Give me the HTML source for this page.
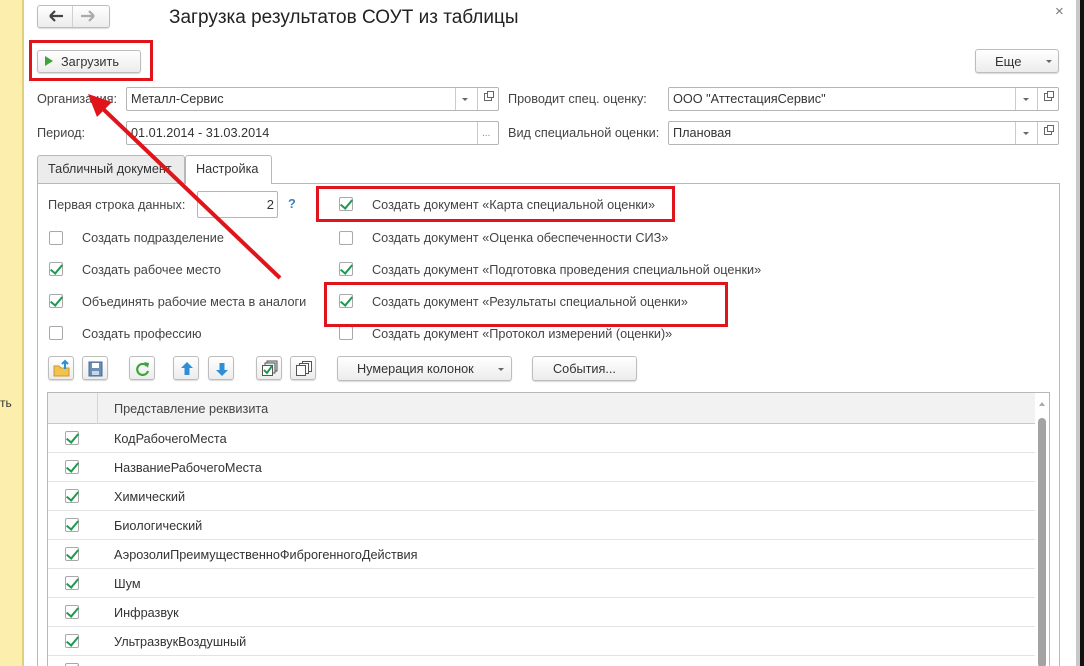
<!DOCTYPE html>
<html><head><meta charset="utf-8"><style>
*{box-sizing:border-box;margin:0;padding:0}
html,body{width:1084px;height:666px;overflow:hidden}
body{background:#fff;font-family:"Liberation Sans",sans-serif;font-size:12.7px;color:#444;position:relative}
.a{position:absolute}
.btn{position:absolute;border:1px solid #bdbdbd;border-radius:3px;background:linear-gradient(#fff,#ececec);box-shadow:0 1px 1px rgba(0,0,0,.15)}
.inp{position:absolute;border:1px solid #b5b5b5;border-radius:2px;background:#fff;height:24px}
.inp span{position:absolute;left:4px;top:4px;color:#333}
.cb{position:absolute;width:14px;height:14px;border:1px solid #a9a9a9;border-radius:2px;background:#fff}
.cb.on::after{content:"";position:absolute;left:3px;top:-1px;width:5px;height:10px;border:solid #1e9a4f;border-width:0 2.5px 2.5px 0;transform:rotate(40deg)}
.red{position:absolute;border:3.5px solid #e0141b}
.row{position:absolute;left:48px;width:987px;height:29px;border-bottom:1px solid #e3e3e3}
.row .cb{left:17px;top:7px}
.row span{position:absolute;left:66px;top:8px;color:#333}
.ib{width:26px;height:24px}
.ib svg{position:absolute;left:0;top:0}
</style></head><body>
<div class="a" style="left:0;top:0;width:24px;height:666px;background:#fcefad;border-right:2px solid #e2cf7b"></div>
<div class="a" style="left:0;top:396px;font-size:12px;color:#333">ть</div>
<div class="a" style="left:1076px;top:0;width:4px;height:666px;background:#c8c8c8"></div>
<div class="a" style="left:1080px;top:0;width:4px;height:666px;background:#111"></div>

<div class="btn" style="left:37px;top:5px;width:73px;height:23px"></div>
<div class="a" style="left:72px;top:6px;width:1px;height:21px;background:#d0d0d0"></div>
<svg class="a" style="left:46px;top:9px" width="60" height="16">
<path d="M4 7 H17 M4 7 L9 2 M4 7 L9 12" stroke="#444" stroke-width="2.2" fill="none"/>
<path d="M35 7 H48 M48 7 L43 2 M48 7 L43 12" stroke="#aaa" stroke-width="2.2" fill="none"/>
</svg>
<div class="a" style="left:169px;top:7px;font-size:19px;color:#222">Загрузка результатов СОУТ из таблицы</div>
<div class="a" style="left:1055px;top:3px;font-size:15px;color:#777">×</div>

<div class="btn" style="left:37px;top:50px;width:104px;height:23px"></div>
<div class="a" style="left:45px;top:56px;width:0;height:0;border-left:8px solid #3aa63a;border-top:5px solid transparent;border-bottom:5px solid transparent"></div>
<div class="a" style="left:61px;top:55px;color:#333">Загрузить</div>
<div class="red" style="left:29px;top:40px;width:124px;height:41px"></div>

<div class="btn" style="left:975px;top:49px;width:84px;height:24px"></div>
<div class="a" style="left:995px;top:54px;font-size:13px;color:#333">Еще</div>
<div class="a" style="left:1046px;top:60px;border-top:3px solid #666;border-left:3px solid transparent;border-right:3px solid transparent"></div>

<div class="a" style="left:37px;top:92px">Организация:</div>
<div class="inp" style="left:126px;top:87px;width:373px"><span>Металл-Сервис</span>
<div class="a" style="left:328px;top:0;width:1px;height:22px;background:#ccc"></div>
<div class="a" style="left:335px;top:10px;border-top:3px solid #666;border-left:3px solid transparent;border-right:3px solid transparent"></div>
<div class="a" style="left:350px;top:0;width:1px;height:22px;background:#ccc"></div>
<div class="a" style="left:357px;top:5px;width:8px;height:8px;border:1px solid #666"></div>
<div class="a" style="left:360px;top:3px;width:7px;height:7px;border:1px solid #666;background:#fff"></div></div>
<div class="a" style="left:508px;top:92px">Проводит спец. оценку:</div>
<div class="inp" style="left:668px;top:87px;width:391px"><span>ООО "АттестацияСервис"</span>
<div class="a" style="left:346px;top:0;width:1px;height:22px;background:#ccc"></div>
<div class="a" style="left:354px;top:10px;border-top:3px solid #666;border-left:3px solid transparent;border-right:3px solid transparent"></div>
<div class="a" style="left:368px;top:0;width:1px;height:22px;background:#ccc"></div>
<div class="a" style="left:375px;top:5px;width:8px;height:8px;border:1px solid #666"></div>
<div class="a" style="left:378px;top:3px;width:7px;height:7px;border:1px solid #666;background:#fff"></div></div>

<div class="a" style="left:37px;top:126px">Период:</div>
<div class="inp" style="left:126px;top:121px;width:373px"><span>01.01.2014 - 31.03.2014</span>
<div class="a" style="left:350px;top:0;width:1px;height:22px;background:#ccc"></div>
<div class="a" style="left:355px;top:6px;font-size:10px;color:#888">...</div></div>
<div class="a" style="left:508px;top:126px">Вид специальной оценки:</div>
<div class="inp" style="left:668px;top:121px;width:391px"><span>Плановая</span>
<div class="a" style="left:346px;top:0;width:1px;height:22px;background:#ccc"></div>
<div class="a" style="left:354px;top:10px;border-top:3px solid #666;border-left:3px solid transparent;border-right:3px solid transparent"></div>
<div class="a" style="left:368px;top:0;width:1px;height:22px;background:#ccc"></div>
<div class="a" style="left:375px;top:5px;width:8px;height:8px;border:1px solid #666"></div>
<div class="a" style="left:378px;top:3px;width:7px;height:7px;border:1px solid #666;background:#fff"></div></div>

<div class="a" style="left:37px;top:183px;width:1023px;height:490px;border:1px solid #b8b8b8"></div>
<div class="a" style="left:37px;top:155px;width:148px;height:29px;background:#ececec;border:1px solid #b8b8b8;border-radius:3px 3px 0 0"></div>
<div class="a" style="left:48px;top:162px;color:#333">Табличный документ</div>
<div class="a" style="left:185px;top:155px;width:87px;height:29px;background:#fff;border:1px solid #b8b8b8;border-bottom:none;border-radius:3px 3px 0 0"></div>
<div class="a" style="left:196px;top:162px;color:#333">Настройка</div>

<div class="a" style="left:48px;top:198px">Первая строка данных:</div>
<div class="inp" style="left:197px;top:191px;width:81px;height:27px"><span style="left:auto;right:3px;top:5px;font-size:13px">2</span></div>
<div class="a" style="left:288px;top:197px;color:#3a7fc0;font-weight:bold">?</div>

<div class="cb" style="left:49px;top:231px"></div><div class="a" style="left:82px;top:231px">Создать подразделение</div>
<div class="cb on" style="left:49px;top:262px"></div><div class="a" style="left:82px;top:263px">Создать рабочее место</div>
<div class="cb on" style="left:49px;top:294px"></div><div class="a" style="left:82px;top:295px">Объединять рабочие места в аналоги</div>
<div class="cb" style="left:49px;top:326px"></div><div class="a" style="left:82px;top:327px">Создать профессию</div>

<div class="cb on" style="left:339px;top:197px"></div><div class="a" style="left:372px;top:198px">Создать документ «Карта специальной оценки»</div>
<div class="cb" style="left:339px;top:231px"></div><div class="a" style="left:372px;top:231px">Создать документ «Оценка обеспеченности СИЗ»</div>
<div class="cb on" style="left:339px;top:262px"></div><div class="a" style="left:372px;top:263px">Создать документ «Подготовка проведения специальной оценки»</div>
<div class="cb on" style="left:339px;top:294px"></div><div class="a" style="left:372px;top:295px">Создать документ «Результаты специальной оценки»</div>
<div class="cb" style="left:339px;top:326px"></div><div class="a" style="left:372px;top:327px">Создать документ «Протокол измерений (оценки)»</div>
<div class="red" style="left:316px;top:186px;width:359px;height:36px"></div>
<div class="red" style="left:324px;top:282px;width:404px;height:45px"></div>

<div class="btn ib" style="left:48px;top:356px"><svg width="26" height="24"><path d="M5 9 h5 l2 2 h8 v8 h-15z" fill="#f2c24f" stroke="#c99a2a"/><path d="M16 12 V4 M13 7 L16 4 L19 7" stroke="#2d8fd8" stroke-width="2" fill="none"/></svg></div>
<div class="btn ib" style="left:82px;top:356px"><svg width="26" height="24"><rect x="6" y="5" width="13" height="14" fill="#6b8fb5" stroke="#4a6a8e"/><rect x="9" y="6" width="7" height="5" fill="#fff"/><rect x="9" y="14" width="7" height="4" fill="#c8d6e6"/></svg></div>
<div class="btn ib" style="left:129px;top:356px"><svg width="26" height="24"><path d="M17 9 A5.5 5.5 0 1 0 18 14" stroke="#3aa63a" stroke-width="2.2" fill="none"/><path d="M14 5 L19 6 L18 11z" fill="#3aa63a"/></svg></div>
<div class="btn ib" style="left:173px;top:356px"><svg width="26" height="24"><path d="M13 5 L19 11 H15.5 V18 H10.5 V11 H7z" fill="#2d8fd8"/></svg></div>
<div class="btn ib" style="left:208px;top:356px"><svg width="26" height="24"><path d="M13 19 L19 13 H15.5 V6 H10.5 V13 H7z" fill="#2d8fd8"/></svg></div>
<div class="btn ib" style="left:256px;top:356px"><svg width="26" height="24"><rect x="10" y="4" width="10" height="10" fill="#ddd" stroke="#555"/><rect x="8" y="6" width="10" height="10" fill="#eee" stroke="#555"/><rect x="5.5" y="8.5" width="10" height="10" fill="#fff" stroke="#555"/><path d="M7 13 L10 16 L15 9" stroke="#1e9a4f" stroke-width="2" fill="none"/></svg></div>
<div class="btn ib" style="left:290px;top:356px"><svg width="26" height="24"><rect x="11.5" y="4.5" width="9" height="10" fill="#fff" stroke="#555"/><rect x="8.5" y="6.5" width="9" height="10" fill="#fff" stroke="#555"/><rect x="5.5" y="8.5" width="9" height="10" fill="#fff" stroke="#555"/></svg></div>
<div class="btn" style="left:337px;top:356px;width:175px;height:25px"></div>
<div class="a" style="left:357px;top:362px;color:#333">Нумерация колонок</div>
<div class="a" style="left:498px;top:368px;border-top:3px solid #666;border-left:3px solid transparent;border-right:3px solid transparent"></div>
<div class="btn" style="left:532px;top:356px;width:105px;height:25px"></div>
<div class="a" style="left:553px;top:362px;color:#333">События...</div>

<div class="a" style="left:47px;top:392px;width:1003px;height:280px;border:1px solid #b8b8b8"></div>
<div class="a" style="left:48px;top:393px;width:987px;height:31px;background:#f2f2f2;border-bottom:1px solid #c8c8c8"></div>
<div class="a" style="left:97px;top:393px;width:1px;height:31px;background:#d5d5d5"></div>
<div class="a" style="left:114px;top:402px;color:#444">Представление реквизита</div>
<div class="a" style="left:1038px;top:418px;width:8px;height:250px;background:#a3a3a3;border-radius:4px"></div>
<div class="a" style="left:1039px;top:402px;border-bottom:4px solid #aaa;border-left:3px solid transparent;border-right:3px solid transparent"></div>

<div class="row" style="top:424px"><div class="cb on"></div><span>КодРабочегоМеста</span></div>
<div class="row" style="top:453px"><div class="cb on"></div><span>НазваниеРабочегоМеста</span></div>
<div class="row" style="top:482px"><div class="cb on"></div><span>Химический</span></div>
<div class="row" style="top:511px"><div class="cb on"></div><span>Биологический</span></div>
<div class="row" style="top:540px"><div class="cb on"></div><span>АэрозолиПреимущественноФиброгенногоДействия</span></div>
<div class="row" style="top:569px"><div class="cb on"></div><span>Шум</span></div>
<div class="row" style="top:598px"><div class="cb on"></div><span>Инфразвук</span></div>
<div class="row" style="top:627px"><div class="cb on"></div><span>УльтразвукВоздушный</span></div>
<div class="row" style="top:656px;border-bottom:none;height:10px;overflow:hidden"><div class="cb on"></div></div>

<svg class="a" style="left:0;top:0" width="1084" height="666">
<line x1="280" y1="278" x2="100" y2="106" stroke="#e0141b" stroke-width="4"/>
<polygon points="88,94 112,102 97,117" fill="#e0141b"/>
</svg>
</body></html>
